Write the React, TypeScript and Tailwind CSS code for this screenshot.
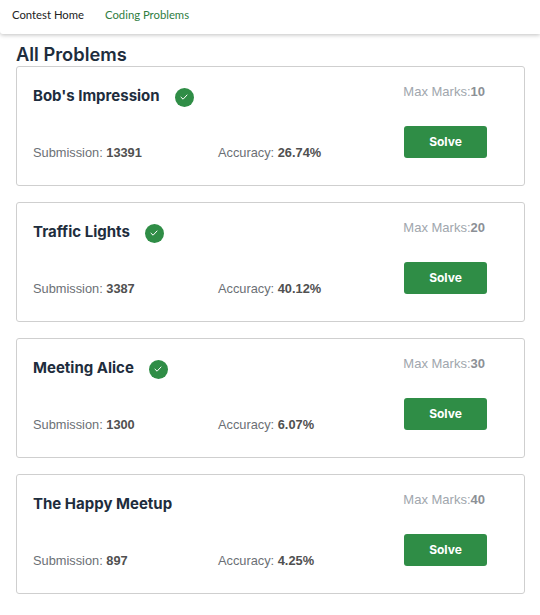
import React from 'react';

interface Problem {
  title: string;
  solved: boolean;
  marks: number;
  submissions: number;
  accuracy: string;
}

const problems: Problem[] = [
  { title: "Bob's Impression", solved: true, marks: 10, submissions: 13391, accuracy: '26.74%' },
  { title: 'Traffic Lights', solved: true, marks: 20, submissions: 3387, accuracy: '40.12%' },
  { title: 'Meeting Alice', solved: true, marks: 30, submissions: 1300, accuracy: '6.07%' },
  { title: 'The Happy Meetup', solved: false, marks: 40, submissions: 897, accuracy: '4.25%' },
];

const SolvedBadge = () => (
  <span className="ml-[15px] mt-[2px] flex h-[19px] w-[19px] items-center justify-center rounded-full bg-[#2f8d46]">
    <svg width="10" height="10" viewBox="0 0 10 10" fill="none" stroke="white" strokeWidth="1" strokeLinecap="round" strokeLinejoin="round">
      <path d="M2 5.2l2.1 2L8 3" />
    </svg>
  </span>
);

const ProblemCard = ({ problem }: { problem: Problem }) => (
  <div className="flex h-[120px] justify-between rounded-[3px] border border-[#cfcfcf] bg-white pl-4 pr-[37px]">
    <div className="flex flex-col">
      <div className="mt-[17px] flex h-6 items-center">
        <span className="font-['Inter',sans-serif] text-[15px] font-bold leading-6 text-[#1e2d3d]">{problem.title}</span>
        {problem.solved && <SolvedBadge />}
      </div>
      <div className="mt-[35px] flex font-['Liberation_Sans',sans-serif] text-[12.8px] leading-5 text-[#6b7075]">
        <span className="w-[185px]">
          Submission: <b className="font-bold text-[#505050]">{problem.submissions}</b>
        </span>
        <span>
          Accuracy: <b className="font-bold text-[#505050]">{problem.accuracy}</b>
        </span>
      </div>
    </div>
    <div className="flex flex-col items-end">
      <div className="mt-[15px] mr-[2px] font-['Liberation_Sans',sans-serif] text-[13px] leading-5 text-[#a0a6ad]">
        Max Marks:<b className="font-bold text-[#8c9096]">{problem.marks}</b>
      </div>
      <button className="mt-[24px] h-8 w-[83px] rounded-[3px] bg-[#2f8d46] font-['Inter',sans-serif] text-[12px] font-bold text-white">
        Solve
      </button>
    </div>
  </div>
);

export default function App() {
  return (
    <div className="min-h-[615px] bg-white">
      <nav className="flex h-[34px] items-center gap-[21px] rounded-bl-[3px] bg-white pb-[3px] pl-3 font-['Lato',sans-serif] text-[11.3px] shadow-[0_1px_4px_rgba(0,0,0,0.25)]">
        <span className="text-[#222]">Contest Home</span>
        <span className="text-[#2f7d3f]">Coding Problems</span>
      </nav>
      <main className="pl-4 pr-[15px]">
        <h1 className="mb-[1px] mt-[9px] font-['Inter',sans-serif] text-[18.3px] font-semibold leading-[22px] text-[#1e2d3d]">All Problems</h1>
        <div className="flex flex-col gap-4">
          {problems.map(p => (
            <ProblemCard key={p.title} problem={p} />
          ))}
        </div>
      </main>
    </div>
  );
}
